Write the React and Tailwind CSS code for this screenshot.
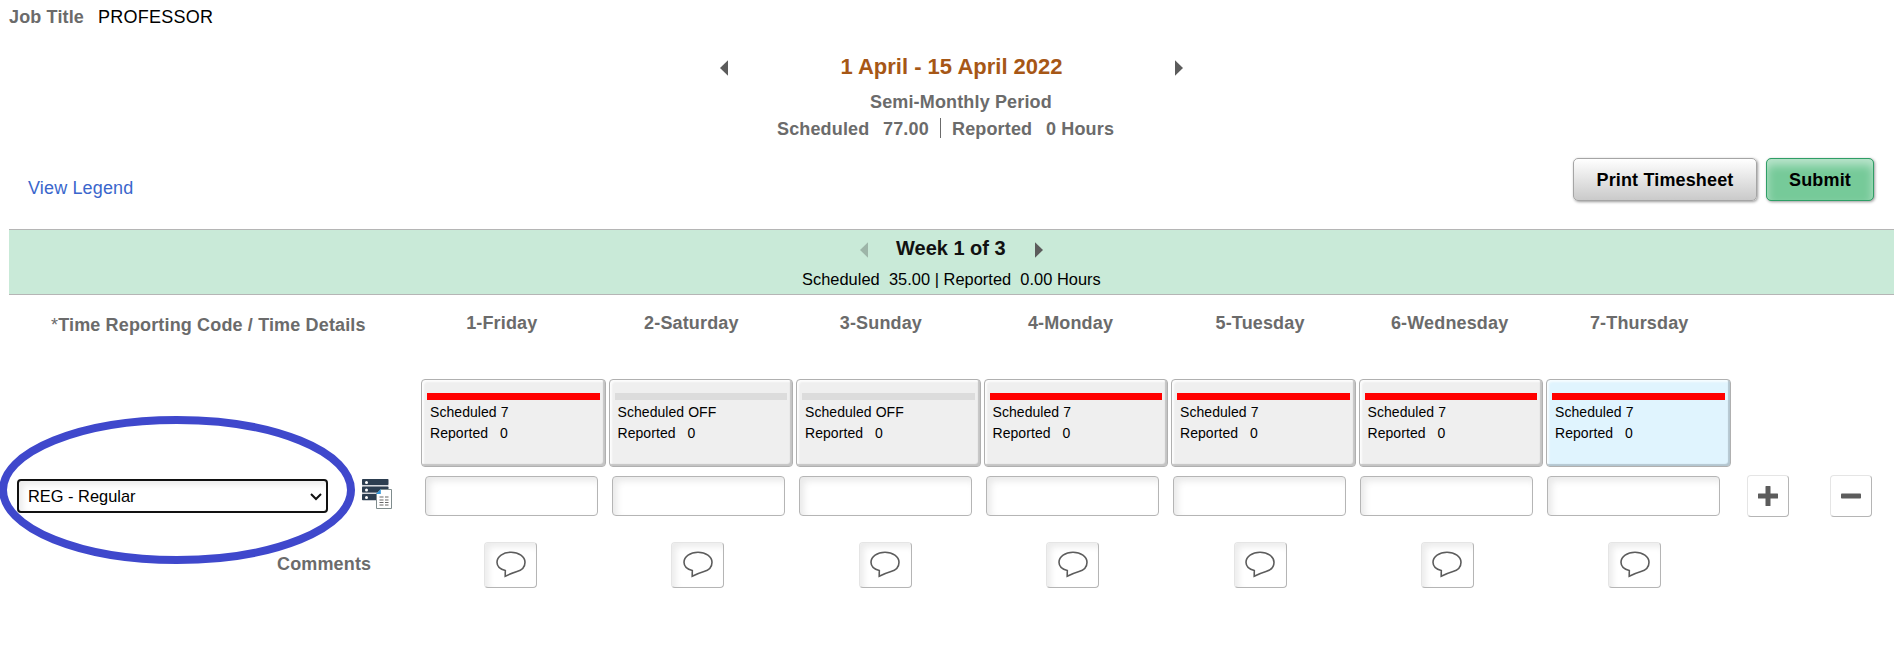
import { useState } from "react";

const days = [
    { label: '1-Friday', scheduled: '7' },
    { label: '2-Saturday', scheduled: 'OFF' },
    { label: '3-Sunday', scheduled: 'OFF' },
    { label: '4-Monday', scheduled: '7' },
    { label: '5-Tuesday', scheduled: '7' },
    { label: '6-Wednesday', scheduled: '7' },
    { label: '7-Thursday', scheduled: '7', today: true },
];

// icons ------------------------------------------------

function Arrow({ flip, className }) {
    return (
        <svg className={className} width="8" height="16" viewBox="0 0 8 16">
            <path d={flip ? "M8 0.3V15.7L0 8Z" : "M0 0.3V15.7L8 8Z"} fill="currentColor" />
        </svg>
    );
}

function DetailsIcon() {
    return (
        <svg width="30" height="30" viewBox="0 0 30 30">
            <rect x="0" y="0" width="26.5" height="6" rx="0.8" fill="#2c3e50" />
            <rect x="0" y="6" width="26.5" height="1.5" fill="#d5d8dc" />
            <rect x="0" y="7.5" width="26.5" height="6.3" rx="0.8" fill="#2c3e50" />
            <rect x="0" y="13.8" width="15" height="1.2" fill="#d5d8dc" />
            <rect x="0" y="15" width="18" height="6.2" rx="0.8" fill="#2c3e50" />
            <circle cx="4.5" cy="3.4" r="1.5" fill="#fff" />
            <circle cx="4.5" cy="10.9" r="1.5" fill="#fff" />
            <circle cx="4.5" cy="18.4" r="1.5" fill="#fff" />
            <path d="M18.5 10.5H29.5V29.5H14.5V14.5Z" fill="#fff" stroke="#7f8c8d" />
            <path d="M18.8 10V15H14Z" fill="#3498db" />
            <path d="M17.5 18H21.5M23 18H26.5M17.5 21H21.5M23 21H26.5M17.5 23.5H21.5M23 23.5H26.5M17.5 26H21.5M23 26H26.5" stroke="#666" strokeWidth="1.2" />
        </svg>
    );
}

function Bubble() {
    return (
        <svg width="30" height="27" viewBox="0 0 30 27" fill="none" stroke="#5c5c5c" strokeWidth="1.6">
            <path d="M9.3 19.6C4.3 18.2 1 15 1 11.2C1 5.6 7.2 1.2 15 1.2S29 5.6 29 11.2C29 15.8 25.8 19.1 21 20.5C16.5 21.9 13 23.3 9.2 25.2Z" />
        </svg>
    );
}

// ------------------------------------------------------

function DayCard({ day }) {
    return (
        <div className={`w-[184.5px] h-[88px] rounded-[4px] border border-[#b0b0b0] pt-[13px] px-[5px] ${day.today ? 'bg-[#e0f4fe] shadow-[inset_-2px_-2px_1px_#b4c6d0,inset_2px_2px_2px_#f6fcff]' : 'bg-[#efefef] shadow-[inset_-2px_-2px_1px_#c4c4c4,inset_2px_2px_2px_#fcfcfc]'}`}>
            <div className={`h-[7px] ${day.scheduled === 'OFF' ? 'bg-[#dcdcdc]' : 'bg-[#ff0000]'}`}></div>
            <div className="pl-[3px] pt-[2px] text-[14px] leading-[21px] tracking-[0.06px] text-black">
                <p>Scheduled {day.scheduled}</p>
                <p className="flex gap-[12px]"><span>Reported</span><span>0</span></p>
            </div>
        </div>
    );
}

export default function App() {

    const [code, setCode] = useState('REG');

  return (
    <main className="relative w-[1894px] h-[652px] overflow-hidden bg-white font-['Liberation_Sans',Arial,sans-serif] text-[18px] tracking-[0.15px] text-black">
        <div className="flex gap-[14px] pl-[9px] pt-[7px] h-[52px] leading-5">
            <span className="font-bold text-[#6b6b6b]">Job Title</span>
            <span className="tracking-[0.25px]">PROFESSOR</span>
        </div>

        {/* period */}
        <div className="flex flex-col h-[91px] font-bold text-[#6b6b6b]">
            <div className="flex items-center justify-between w-[463px] h-[28px] ml-[720px] mt-[1px]">
                <Arrow flip className="text-[#5c5c5c] mt-[2px]" />
                <h1 className="text-[22px] leading-[28px] tracking-normal text-[#a65716]">1 April - 15 April 2022</h1>
                <Arrow className="text-[#5c5c5c] mt-[2px]" />
            </div>
            <p className="ml-[870px] mt-[8px] leading-[26px]">Semi-Monthly Period</p>
            <div className="flex items-center ml-[777px] mt-[1px] h-[27px] leading-[27px]">
                <span className="w-[106px]">Scheduled</span>
                <span className="w-[57px]">77.00</span>
                <span className="w-px h-[20px] bg-[#6b6b6b] mr-[11px] -mt-[3px]"></span>
                <span className="w-[94px]">Reported</span>
                <span>0 Hours</span>
            </div>
        </div>

        {/* actions */}
        <div className="flex justify-between items-start h-[86px] pt-[15px] pl-[28px] pr-[20px]">
            <a href="#" className="mt-[20px] leading-[20px] text-[#3a66cc]">View Legend</a>
            <div className="flex gap-[9px] font-bold">
                <button className="w-[184px] h-[43px] pt-[1px] rounded-[5px] border border-[#a5a5a5] bg-linear-to-b from-white to-[#cacaca] shadow-[1px_1px_3px_rgba(0,0,0,0.4)]">Print Timesheet</button>
                <button className="w-[108px] h-[43px] pt-[1px] rounded-[5px] border border-[#2f9e66] bg-[#76ca99] shadow-[1px_1px_3px_rgba(0,0,0,0.4),inset_0_6px_10px_rgba(255,255,255,0.5)]">Submit</button>
            </div>
        </div>

        {/* week */}
        <div className="ml-[9px] h-[66px] border-y border-[#b5b5b5] bg-[#c9ead8]">
            <div className="flex items-center h-[37px] pl-[851px]">
                <Arrow flip className="text-[#9db5a8] mt-[3px]" />
                <h2 className="w-[167px] pl-[28px] -mt-[1px] text-[20px] tracking-normal font-bold text-[#111]">Week 1 of 3</h2>
                <Arrow className="text-[#5c5c5c] mt-[3px]" />
            </div>
            <p className="pl-[793px] text-[16.4px] leading-[24px] tracking-[0.03px] whitespace-pre">Scheduled  35.00 | Reported  0.00 Hours</p>
        </div>

        {/* column headings */}
        <div className="flex h-[84px] font-bold text-[#6b6b6b] leading-[20px]">
            <p className="w-[407px] pl-[51px] pt-[20px]"><span className="font-normal">*</span>Time Reporting Code / Time Details</p>
            <div className="grid grid-cols-7 w-[1327px] pt-[18px] text-center">
                {days.map((day) => <p key={day.label}>{day.label}</p>)}
            </div>
        </div>

        <div className="flex gap-[3px] pl-[421px]">
            {days.map((day) => <DayCard key={day.label} day={day} />)}
        </div>

        {/* entry row */}
        <div className="flex h-[58px] pt-[8px]">
            <div className="relative shrink-0 w-[311px] h-[34px] ml-[17px] mt-[4px]">
                <select value={code} onChange={(e) => setCode(e.target.value)} className="appearance-none w-full h-full rounded-[4px] border-2 border-[#111] pl-[9px] text-[16.4px] tracking-normal bg-white shadow-[inset_4px_4px_6px_rgba(0,0,0,0.08)]">
                    <option value="REG">REG - Regular</option>
                </select>
                <svg className="absolute right-[6px] top-[14px] pointer-events-none" width="12" height="8" viewBox="0 0 12 8" fill="none" stroke="#111" strokeWidth="2">
                    <path d="M1 1L6 6L11 1" />
                </svg>
            </div>
            <div className="shrink-0 w-[63px] pl-[34px] pt-[4px]"><DetailsIcon /></div>
            <div className="flex shrink-0 gap-[14px] ml-[34px] pt-[1px]">
                {days.map((day) => (
                    <input key={day.label} className="w-[173px] h-[40px] rounded-[4px] border border-[#b5b5b5] bg-white shadow-[inset_4px_4px_7px_rgba(0,0,0,0.09)]" />
                ))}
            </div>
            <div className="flex shrink-0 gap-[41px] ml-[27px]">
                <button className="flex items-center justify-center size-[42px] rounded-[4px] border border-t-[#e5e5e5] border-l-[#e5e5e5] border-r-[#b5b5b5] border-b-[#b5b5b5]">
                    <svg width="20" height="20" viewBox="0 0 20 20" fill="#5c5c5c"><path d="M7.5 0.5Q7.5 0 8 0H12Q12.5 0 12.5 0.5V7.5H19.5Q20 7.5 20 8V12Q20 12.5 19.5 12.5H12.5V19.5Q12.5 20 12 20H8Q7.5 20 7.5 19.5V12.5H0.5Q0 12.5 0 12V8Q0 7.5 0.5 7.5H7.5Z" /></svg>
                </button>
                <button className="flex items-center justify-center size-[42px] rounded-[4px] border border-t-[#e5e5e5] border-l-[#e5e5e5] border-r-[#b5b5b5] border-b-[#b5b5b5]">
                    <svg width="20" height="20" viewBox="0 0 20 20" fill="#5c5c5c"><rect y="7.5" width="20" height="5" rx="0.8" /></svg>
                </button>
            </div>
        </div>

        {/* comments */}
        <div className="flex pt-[17px]">
            <p className="w-[484px] pl-[277px] pt-[12px] leading-[20px] font-bold text-[#6b6b6b]">Comments</p>
            <div className="flex gap-[134.4px]">
                {days.map((day) => (
                    <button key={day.label} className="flex items-center justify-center w-[53px] h-[46px] pb-[1px] rounded-[4px] border border-t-[#e5e5e5] border-l-[#e5e5e5] border-r-[#b5b5b5] border-b-[#b5b5b5] shadow-[inset_4px_4px_6px_rgba(0,0,0,0.08)]">
                        <Bubble />
                    </button>
                ))}
            </div>
        </div>

        {/* highlight round the code select */}
        <svg className="absolute left-0 top-[414px] pointer-events-none" width="358" height="152" viewBox="0 0 358 152">
            <ellipse cx="177" cy="76" rx="174" ry="70" fill="none" stroke="#3f48cc" strokeWidth="8" />
        </svg>
    </main>
  )
}
